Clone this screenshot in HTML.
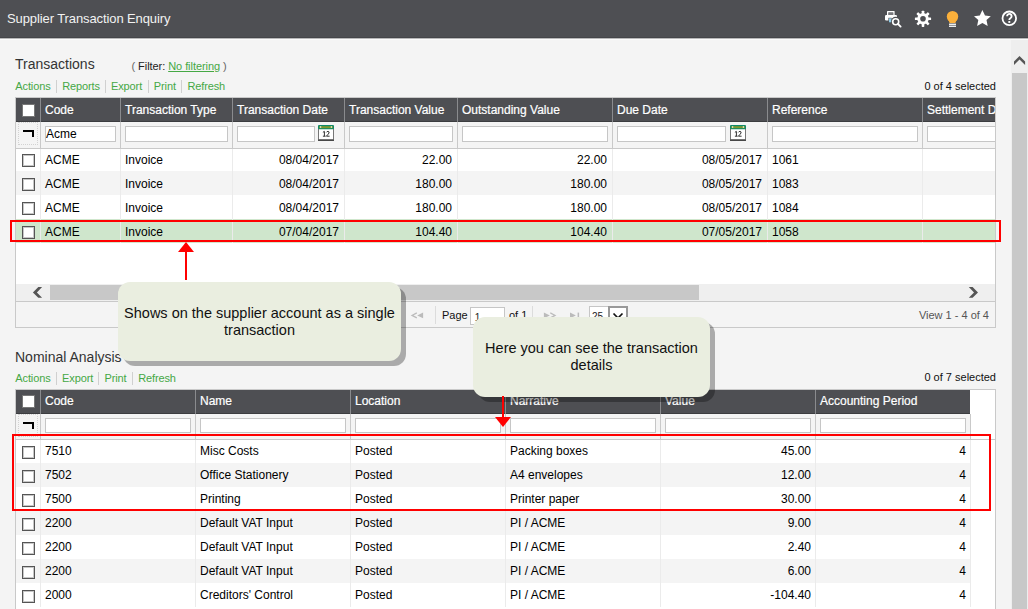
<!DOCTYPE html>
<html><head><meta charset="utf-8"><style>
html,body{margin:0;padding:0;}
body{width:1028px;height:609px;overflow:hidden;position:relative;background:#f4f4f4;font-family:"Liberation Sans",sans-serif;}
body div, body svg{position:absolute;}
.t{white-space:nowrap;line-height:1;}
.t span{position:static;}
</style></head><body>
<div style="left:0px;top:0px;width:1028px;height:38px;background:#4e4f53;"></div>
<div style="left:0px;top:37px;width:1028px;height:1px;background:#45464a;"></div>
<div style="left:0px;top:38px;width:1028px;height:1px;background:#b9b9ba;"></div>
<div style="left:0px;top:39px;width:1028px;height:1px;background:#fbfbfb;"></div>
<div class="t" style="left:7px;top:12.00px;font-size:13px;color:#f2f2f2;letter-spacing:-0.1px;">Supplier Transaction Enquiry</div>
<svg style="position:absolute;left:870px;top:0px" width="158" height="38" viewBox="870 0 158 38">
  <!-- print preview -->
  <rect x="887" y="11" width="7.6" height="5" rx="0.6" fill="#fff"/>
  <rect x="888.3" y="12.3" width="5" height="3" fill="#66676b"/>
  <rect x="888.3" y="13.1" width="5" height="0.5" fill="#8a8b8e"/>
  <rect x="888.3" y="14.2" width="5" height="0.5" fill="#8a8b8e"/>
  <rect x="885" y="15" width="12" height="5.6" rx="1.3" fill="#fff"/>
  <circle cx="895.7" cy="21.7" r="4.9" fill="#4e4f53"/>
  <rect x="888.4" y="17.8" width="3.2" height="5" fill="#4e4f53"/>
  <rect x="889" y="18.3" width="2.2" height="4" fill="#8fcbe6"/>
  <circle cx="895.7" cy="21.7" r="3.0" fill="none" stroke="#fff" stroke-width="1.6"/>
  <line x1="897.9" y1="23.9" x2="900.6" y2="26.6" stroke="#fff" stroke-width="1.9" stroke-linecap="round"/>
  <!-- gear -->
  <g transform="translate(923,18.8)" fill="#fff">
    <circle r="5.7"/>
    <rect x="-1.3" y="-8.1" width="2.6" height="16.2" rx="0.6"/>
    <rect x="-1.3" y="-8.1" width="2.6" height="16.2" rx="0.6" transform="rotate(45)"/>
    <rect x="-1.3" y="-8.1" width="2.6" height="16.2" rx="0.6" transform="rotate(90)"/>
    <rect x="-1.3" y="-8.1" width="2.6" height="16.2" rx="0.6" transform="rotate(135)"/>
    <circle r="2.8" fill="#4e4f53"/>
  </g>
  <!-- bulb -->
  <circle cx="952.5" cy="16.6" r="5.7" fill="#fbb03b"/>
  <path d="M948.4 19.8 L949.6 22.9 L955.4 22.9 L956.6 19.8 Z" fill="#fbb03b"/>
  <rect x="949" y="23.6" width="7" height="1.3" fill="#fff"/>
  <rect x="949" y="25.6" width="7" height="1.3" fill="#fff"/>
  <!-- star -->
  <path transform="translate(0.4,0)" d="M982 10 L984.6 15.6 L990.4 16.2 L986.1 20.1 L987.3 26 L982 23 L976.7 26 L977.9 20.1 L973.6 16.2 L979.4 15.6 Z" fill="#fff"/>
  <!-- help -->
  <circle cx="1009.3" cy="18.3" r="6.8" fill="none" stroke="#fff" stroke-width="1.8"/>
  <path d="M1007.1 16.2 A2.25 2.25 0 1 1 1010.6 18 C1009.6 18.6 1009.3 19 1009.3 20" fill="none" stroke="#fff" stroke-width="1.9"/>
  <rect x="1008.35" y="21" width="1.9" height="1.9" fill="#fff"/>
</svg>
<div class="t" style="left:15px;top:57.15px;font-size:14px;color:#333;">Transactions</div>
<div class="t" style="left:131.5px;top:60.69px;font-size:11px;color:#222;letter-spacing:-0.06px;"><span style="color:#666">(</span> Filter: <span style="color:#45a845;text-decoration:underline">No filtering</span> <span style="color:#666">)</span></div>
<div class="t" style="left:15.3px;top:80.69px;font-size:11px;color:#45a845;letter-spacing:-0.12px;">Actions</div>
<div style="left:56px;top:80px;width:1px;height:13px;background:#d0d0d0;"></div>
<div class="t" style="left:62.2px;top:80.69px;font-size:11px;color:#45a845;letter-spacing:-0.12px;">Reports</div>
<div style="left:105px;top:80px;width:1px;height:13px;background:#d0d0d0;"></div>
<div class="t" style="left:111px;top:80.69px;font-size:11px;color:#45a845;letter-spacing:-0.12px;">Export</div>
<div style="left:148px;top:80px;width:1px;height:13px;background:#d0d0d0;"></div>
<div class="t" style="left:153.8px;top:80.69px;font-size:11px;color:#45a845;letter-spacing:-0.12px;">Print</div>
<div style="left:181px;top:80px;width:1px;height:13px;background:#d0d0d0;"></div>
<div class="t" style="left:187.4px;top:80.69px;font-size:11px;color:#45a845;letter-spacing:-0.12px;">Refresh</div>
<div class="t" style="right:32px;top:81.19px;font-size:11px;color:#111;">0 of 4 selected</div>
<div style="left:15px;top:97px;width:981px;height:231px;border:1px solid #c9c9c9;box-sizing:border-box;background:#fff;"></div>
<div style="left:16px;top:147px;width:979px;height:24px;background:#fff;"></div>
<div style="left:40px;top:147px;width:1px;height:24px;background:#ebebeb;"></div>
<div style="left:120px;top:147px;width:1px;height:24px;background:#ebebeb;"></div>
<div style="left:232px;top:147px;width:1px;height:24px;background:#ebebeb;"></div>
<div style="left:344px;top:147px;width:1px;height:24px;background:#ebebeb;"></div>
<div style="left:457px;top:147px;width:1px;height:24px;background:#ebebeb;"></div>
<div style="left:612px;top:147px;width:1px;height:24px;background:#ebebeb;"></div>
<div style="left:767px;top:147px;width:1px;height:24px;background:#ebebeb;"></div>
<div style="left:922px;top:147px;width:1px;height:24px;background:#ebebeb;"></div>
<div style="left:22px;top:154px;width:13px;height:13px;background:#fff;border:1px solid #555;box-sizing:border-box;box-shadow:inset 0 0 0 1px rgba(0,0,0,0.22);"></div>
<div class="t" style="left:45px;top:153.84px;font-size:12px;color:#000;">ACME</div>
<div class="t" style="left:125px;top:153.84px;font-size:12px;color:#000;">Invoice</div>
<div class="t" style="right:689px;top:153.84px;font-size:12px;color:#000;">08/04/2017</div>
<div class="t" style="right:576px;top:153.84px;font-size:12px;color:#000;">22.00</div>
<div class="t" style="right:421px;top:153.84px;font-size:12px;color:#000;">22.00</div>
<div class="t" style="right:266px;top:153.84px;font-size:12px;color:#000;">08/05/2017</div>
<div class="t" style="left:772px;top:153.84px;font-size:12px;color:#000;">1061</div>
<div style="left:16px;top:171px;width:979px;height:24px;background:#f4f4f4;"></div>
<div style="left:40px;top:171px;width:1px;height:24px;background:#ebebeb;"></div>
<div style="left:120px;top:171px;width:1px;height:24px;background:#ebebeb;"></div>
<div style="left:232px;top:171px;width:1px;height:24px;background:#ebebeb;"></div>
<div style="left:344px;top:171px;width:1px;height:24px;background:#ebebeb;"></div>
<div style="left:457px;top:171px;width:1px;height:24px;background:#ebebeb;"></div>
<div style="left:612px;top:171px;width:1px;height:24px;background:#ebebeb;"></div>
<div style="left:767px;top:171px;width:1px;height:24px;background:#ebebeb;"></div>
<div style="left:922px;top:171px;width:1px;height:24px;background:#ebebeb;"></div>
<div style="left:22px;top:178px;width:13px;height:13px;background:#fff;border:1px solid #555;box-sizing:border-box;box-shadow:inset 0 0 0 1px rgba(0,0,0,0.22);"></div>
<div class="t" style="left:45px;top:177.84px;font-size:12px;color:#000;">ACME</div>
<div class="t" style="left:125px;top:177.84px;font-size:12px;color:#000;">Invoice</div>
<div class="t" style="right:689px;top:177.84px;font-size:12px;color:#000;">08/04/2017</div>
<div class="t" style="right:576px;top:177.84px;font-size:12px;color:#000;">180.00</div>
<div class="t" style="right:421px;top:177.84px;font-size:12px;color:#000;">180.00</div>
<div class="t" style="right:266px;top:177.84px;font-size:12px;color:#000;">08/05/2017</div>
<div class="t" style="left:772px;top:177.84px;font-size:12px;color:#000;">1083</div>
<div style="left:16px;top:195px;width:979px;height:24px;background:#fff;"></div>
<div style="left:40px;top:195px;width:1px;height:24px;background:#ebebeb;"></div>
<div style="left:120px;top:195px;width:1px;height:24px;background:#ebebeb;"></div>
<div style="left:232px;top:195px;width:1px;height:24px;background:#ebebeb;"></div>
<div style="left:344px;top:195px;width:1px;height:24px;background:#ebebeb;"></div>
<div style="left:457px;top:195px;width:1px;height:24px;background:#ebebeb;"></div>
<div style="left:612px;top:195px;width:1px;height:24px;background:#ebebeb;"></div>
<div style="left:767px;top:195px;width:1px;height:24px;background:#ebebeb;"></div>
<div style="left:922px;top:195px;width:1px;height:24px;background:#ebebeb;"></div>
<div style="left:22px;top:202px;width:13px;height:13px;background:#fff;border:1px solid #555;box-sizing:border-box;box-shadow:inset 0 0 0 1px rgba(0,0,0,0.22);"></div>
<div class="t" style="left:45px;top:201.84px;font-size:12px;color:#000;">ACME</div>
<div class="t" style="left:125px;top:201.84px;font-size:12px;color:#000;">Invoice</div>
<div class="t" style="right:689px;top:201.84px;font-size:12px;color:#000;">08/04/2017</div>
<div class="t" style="right:576px;top:201.84px;font-size:12px;color:#000;">180.00</div>
<div class="t" style="right:421px;top:201.84px;font-size:12px;color:#000;">180.00</div>
<div class="t" style="right:266px;top:201.84px;font-size:12px;color:#000;">08/05/2017</div>
<div class="t" style="left:772px;top:201.84px;font-size:12px;color:#000;">1084</div>
<div style="left:16px;top:219px;width:979px;height:24px;background:#cfe6cc;"></div>
<div style="left:40px;top:219px;width:1px;height:24px;background:#ebebeb;"></div>
<div style="left:120px;top:219px;width:1px;height:24px;background:#ebebeb;"></div>
<div style="left:232px;top:219px;width:1px;height:24px;background:#ebebeb;"></div>
<div style="left:344px;top:219px;width:1px;height:24px;background:#ebebeb;"></div>
<div style="left:457px;top:219px;width:1px;height:24px;background:#ebebeb;"></div>
<div style="left:612px;top:219px;width:1px;height:24px;background:#ebebeb;"></div>
<div style="left:767px;top:219px;width:1px;height:24px;background:#ebebeb;"></div>
<div style="left:922px;top:219px;width:1px;height:24px;background:#ebebeb;"></div>
<div style="left:22px;top:226px;width:13px;height:13px;background:#fff;border:1px solid #555;box-sizing:border-box;box-shadow:inset 0 0 0 1px rgba(0,0,0,0.22);"></div>
<div class="t" style="left:45px;top:225.84px;font-size:12px;color:#000;">ACME</div>
<div class="t" style="left:125px;top:225.84px;font-size:12px;color:#000;">Invoice</div>
<div class="t" style="right:689px;top:225.84px;font-size:12px;color:#000;">07/04/2017</div>
<div class="t" style="right:576px;top:225.84px;font-size:12px;color:#000;">104.40</div>
<div class="t" style="right:421px;top:225.84px;font-size:12px;color:#000;">104.40</div>
<div class="t" style="right:266px;top:225.84px;font-size:12px;color:#000;">07/05/2017</div>
<div class="t" style="left:772px;top:225.84px;font-size:12px;color:#000;">1058</div>
<div style="left:16px;top:98px;width:979px;height:24px;background:#4e4f53;"></div>
<div style="left:16px;top:121px;width:979px;height:1px;background:#3c3d40;"></div>
<div style="left:40px;top:98px;width:1px;height:24px;background:#8a8b8e;"></div>
<div class="t" style="left:45px;top:103.84px;font-size:12px;color:#fff;-webkit-text-stroke:0.2px #fff;">Code</div>
<div style="left:120px;top:98px;width:1px;height:24px;background:#8a8b8e;"></div>
<div class="t" style="left:125px;top:103.84px;font-size:12px;color:#fff;-webkit-text-stroke:0.2px #fff;">Transaction Type</div>
<div style="left:232px;top:98px;width:1px;height:24px;background:#8a8b8e;"></div>
<div class="t" style="left:237px;top:103.84px;font-size:12px;color:#fff;-webkit-text-stroke:0.2px #fff;">Transaction Date</div>
<div style="left:344px;top:98px;width:1px;height:24px;background:#8a8b8e;"></div>
<div class="t" style="left:349px;top:103.84px;font-size:12px;color:#fff;-webkit-text-stroke:0.2px #fff;">Transaction Value</div>
<div style="left:457px;top:98px;width:1px;height:24px;background:#8a8b8e;"></div>
<div class="t" style="left:462px;top:103.84px;font-size:12px;color:#fff;-webkit-text-stroke:0.2px #fff;">Outstanding Value</div>
<div style="left:612px;top:98px;width:1px;height:24px;background:#8a8b8e;"></div>
<div class="t" style="left:617px;top:103.84px;font-size:12px;color:#fff;-webkit-text-stroke:0.2px #fff;">Due Date</div>
<div style="left:767px;top:98px;width:1px;height:24px;background:#8a8b8e;"></div>
<div class="t" style="left:772px;top:103.84px;font-size:12px;color:#fff;-webkit-text-stroke:0.2px #fff;">Reference</div>
<div style="left:922px;top:98px;width:1px;height:24px;background:#8a8b8e;"></div>
<div class="t" style="left:927px;top:103.84px;font-size:12px;color:#fff;-webkit-text-stroke:0.2px #fff;">Settlement Date</div>
<div style="left:22px;top:104px;width:13px;height:13px;background:#fff;border:1px solid #777;box-sizing:border-box;"></div>
<div style="left:16px;top:122px;width:979px;height:27px;background:#f4f4f4;"></div>
<div style="left:16px;top:148px;width:979px;height:1px;background:#c9c9c9;"></div>
<div style="left:40px;top:122px;width:1px;height:27px;background:#c9c9c9;"></div>
<div style="left:120px;top:122px;width:1px;height:27px;background:#c9c9c9;"></div>
<div style="left:232px;top:122px;width:1px;height:27px;background:#c9c9c9;"></div>
<div style="left:344px;top:122px;width:1px;height:27px;background:#c9c9c9;"></div>
<div style="left:457px;top:122px;width:1px;height:27px;background:#c9c9c9;"></div>
<div style="left:612px;top:122px;width:1px;height:27px;background:#c9c9c9;"></div>
<div style="left:767px;top:122px;width:1px;height:27px;background:#c9c9c9;"></div>
<div style="left:922px;top:122px;width:1px;height:27px;background:#c9c9c9;"></div>
<div style="left:18px;top:122px;width:20px;height:23px;border:1px dotted #d2d2d2;box-sizing:border-box;"></div>
<div style="left:23px;top:130px;width:11px;height:2px;background:#000;"></div>
<div style="left:32px;top:130px;width:2px;height:7px;background:#000;"></div>
<div style="left:45px;top:126px;width:71px;height:16px;background:#fff;border:1px solid #c6c6c6;box-sizing:border-box;"></div>
<div class="t" style="left:46px;top:127.84px;font-size:12px;color:#000;">Acme</div>
<div style="left:125px;top:126px;width:103px;height:16px;background:#fff;border:1px solid #c6c6c6;box-sizing:border-box;"></div>
<div style="left:237px;top:126px;width:78px;height:16px;background:#fff;border:1px solid #c6c6c6;box-sizing:border-box;"></div>
<svg style="position:absolute;left:318px;top:125px" width="16" height="16" viewBox="0 0 16 16">
<rect x="0.5" y="0.5" width="15" height="15" rx="1" fill="#fff" stroke="#777" stroke-width="1"/>
<rect x="0" y="14.3" width="16" height="1.7" rx="0.6" fill="#474747"/>
<rect x="0" y="0" width="16" height="4.2" rx="1.2" fill="#0e8a6a"/>
<rect x="1.2" y="1.2" width="13.6" height="2" fill="#7e9a2e"/>
<circle cx="2.6" cy="1.9" r="0.75" fill="#fff"/>
<circle cx="13.4" cy="1.9" r="0.75" fill="#fff"/>
<path d="M4.9 7.3 L6.4 6.4 V11.2 M4.9 11.2 H7.6" fill="none" stroke="#333" stroke-width="1"/>
<path d="M8.3 7.4 Q8.9 6.3 10.1 6.4 Q11.5 6.6 11 8 Q10.6 8.8 8.4 11.2 H11.6" fill="none" stroke="#333" stroke-width="1"/>
</svg>
<div style="left:349px;top:126px;width:104px;height:16px;background:#fff;border:1px solid #c6c6c6;box-sizing:border-box;"></div>
<div style="left:462px;top:126px;width:146px;height:16px;background:#fff;border:1px solid #c6c6c6;box-sizing:border-box;"></div>
<div style="left:617px;top:126px;width:109px;height:16px;background:#fff;border:1px solid #c6c6c6;box-sizing:border-box;"></div>
<svg style="position:absolute;left:730px;top:125px" width="16" height="16" viewBox="0 0 16 16">
<rect x="0.5" y="0.5" width="15" height="15" rx="1" fill="#fff" stroke="#777" stroke-width="1"/>
<rect x="0" y="14.3" width="16" height="1.7" rx="0.6" fill="#474747"/>
<rect x="0" y="0" width="16" height="4.2" rx="1.2" fill="#0e8a6a"/>
<rect x="1.2" y="1.2" width="13.6" height="2" fill="#7e9a2e"/>
<circle cx="2.6" cy="1.9" r="0.75" fill="#fff"/>
<circle cx="13.4" cy="1.9" r="0.75" fill="#fff"/>
<path d="M4.9 7.3 L6.4 6.4 V11.2 M4.9 11.2 H7.6" fill="none" stroke="#333" stroke-width="1"/>
<path d="M8.3 7.4 Q8.9 6.3 10.1 6.4 Q11.5 6.6 11 8 Q10.6 8.8 8.4 11.2 H11.6" fill="none" stroke="#333" stroke-width="1"/>
</svg>
<div style="left:772px;top:126px;width:146px;height:16px;background:#fff;border:1px solid #c6c6c6;box-sizing:border-box;"></div>
<div style="left:927px;top:126px;width:146px;height:16px;background:#fff;border:1px solid #c6c6c6;box-sizing:border-box;"></div>
<div style="left:995px;top:97px;width:33px;height:231px;background:#f4f4f4;"></div>
<div style="left:995px;top:97px;width:1px;height:231px;background:#c9c9c9;"></div>
<div style="left:15px;top:97px;width:981px;height:1px;background:#c9c9c9;"></div>
<div style="left:16px;top:284px;width:979px;height:17px;background:#efefef;"></div>
<div style="left:50px;top:285px;width:649px;height:15px;background:#c8c8c8;"></div>
<div style="left:16px;top:301px;width:979px;height:26px;background:#f4f4f4;"></div>
<div style="left:16px;top:301px;width:979px;height:1px;background:#c9c9c9;"></div>
<div style="left:15px;top:327px;width:981px;height:1px;background:#c9c9c9;"></div>
<svg style="position:absolute;left:0;top:0" width="1028" height="609" viewBox="0 0 1028 609"><path d="M416.8 312.9 L412 315.4 L416.8 317.9" fill="none" stroke="#bbb" stroke-width="1.2"/><path d="M417.2 315.4 L423.1 312.6 L423.1 318.2 Z" fill="#bbb"/><path d="M543.9 312.6 L549.9 315.4 L543.9 318.2 Z" fill="#bbb"/><path d="M550.3 312.9 L555.1 315.4 L550.3 317.9" fill="none" stroke="#bbb" stroke-width="1.2"/><path d="M570 312.6 L575.9 315.4 L570 318.2 Z" fill="#bbb"/><rect x="577.6" y="312.6" width="1.5" height="5.6" fill="#bbb"/></svg>
<div style="left:435px;top:306px;width:1px;height:18px;background:#dcdcdc;"></div>
<div class="t" style="left:442px;top:310.19px;font-size:11px;color:#111;">Page</div>
<div style="left:470px;top:307px;width:35px;height:18px;background:#fff;border:1px solid #c6c6c6;box-sizing:border-box;"></div>
<div class="t" style="left:474.8px;top:312.54px;font-size:10px;color:#222;">1</div>
<div class="t" style="left:509px;top:310.19px;font-size:11px;color:#111;">of 1</div>
<div style="left:532px;top:306px;width:1px;height:18px;background:#dcdcdc;"></div>
<div style="left:589px;top:306px;width:39px;height:19px;background:#fff;border:1px solid #c6c6c6;box-sizing:border-box;"></div>
<div class="t" style="left:592px;top:311.54px;font-size:10px;color:#222;">25</div>
<div style="left:608px;top:306px;width:20px;height:19px;background:#fff;border:2px solid #999;box-sizing:border-box;"></div>
<svg style="position:absolute;left:610px;top:308px" width="16" height="15" viewBox="0 0 16 15"><path d="M3.5 5.5 L8 10 L12.5 5.5" fill="none" stroke="#111" stroke-width="1.7"/></svg>
<div class="t" style="right:39px;top:310.19px;font-size:11px;color:#555;">View 1 - 4 of 4</div>
<div class="t" style="left:15px;top:349.65px;font-size:14px;color:#333;">Nominal Analysis</div>
<div class="t" style="left:15.3px;top:372.69px;font-size:11px;color:#45a845;letter-spacing:-0.12px;">Actions</div>
<div style="left:56px;top:372px;width:1px;height:13px;background:#d0d0d0;"></div>
<div class="t" style="left:62.1px;top:372.69px;font-size:11px;color:#45a845;letter-spacing:-0.12px;">Export</div>
<div style="left:98px;top:372px;width:1px;height:13px;background:#d0d0d0;"></div>
<div class="t" style="left:104.5px;top:372.69px;font-size:11px;color:#45a845;letter-spacing:-0.12px;">Print</div>
<div style="left:132px;top:372px;width:1px;height:13px;background:#d0d0d0;"></div>
<div class="t" style="left:138.2px;top:372.69px;font-size:11px;color:#45a845;letter-spacing:-0.12px;">Refresh</div>
<div class="t" style="right:32px;top:371.69px;font-size:11px;color:#111;">0 of 7 selected</div>
<div style="left:15px;top:389px;width:981px;height:225px;border:1px solid #c9c9c9;box-sizing:border-box;background:#fff;"></div>
<div style="left:16px;top:439px;width:954px;height:24px;background:#fff;"></div>
<div style="left:40px;top:439px;width:1px;height:24px;background:#ebebeb;"></div>
<div style="left:195px;top:439px;width:1px;height:24px;background:#ebebeb;"></div>
<div style="left:350px;top:439px;width:1px;height:24px;background:#ebebeb;"></div>
<div style="left:505px;top:439px;width:1px;height:24px;background:#ebebeb;"></div>
<div style="left:660px;top:439px;width:1px;height:24px;background:#ebebeb;"></div>
<div style="left:815px;top:439px;width:1px;height:24px;background:#ebebeb;"></div>
<div style="left:970px;top:439px;width:1px;height:24px;background:#ebebeb;"></div>
<div style="left:22px;top:446px;width:13px;height:13px;background:#fff;border:1px solid #555;box-sizing:border-box;box-shadow:inset 0 0 0 1px rgba(0,0,0,0.22);"></div>
<div class="t" style="left:45px;top:444.84px;font-size:12px;color:#000;">7510</div>
<div class="t" style="left:200px;top:444.84px;font-size:12px;color:#000;">Misc Costs</div>
<div class="t" style="left:355px;top:444.84px;font-size:12px;color:#000;">Posted</div>
<div class="t" style="left:510px;top:444.84px;font-size:12px;color:#000;">Packing boxes</div>
<div class="t" style="right:217px;top:444.84px;font-size:12px;color:#000;">45.00</div>
<div class="t" style="right:62px;top:444.84px;font-size:12px;color:#000;">4</div>
<div style="left:16px;top:463px;width:954px;height:24px;background:#f4f4f4;"></div>
<div style="left:40px;top:463px;width:1px;height:24px;background:#ebebeb;"></div>
<div style="left:195px;top:463px;width:1px;height:24px;background:#ebebeb;"></div>
<div style="left:350px;top:463px;width:1px;height:24px;background:#ebebeb;"></div>
<div style="left:505px;top:463px;width:1px;height:24px;background:#ebebeb;"></div>
<div style="left:660px;top:463px;width:1px;height:24px;background:#ebebeb;"></div>
<div style="left:815px;top:463px;width:1px;height:24px;background:#ebebeb;"></div>
<div style="left:970px;top:463px;width:1px;height:24px;background:#ebebeb;"></div>
<div style="left:22px;top:470px;width:13px;height:13px;background:#fff;border:1px solid #555;box-sizing:border-box;box-shadow:inset 0 0 0 1px rgba(0,0,0,0.22);"></div>
<div class="t" style="left:45px;top:468.84px;font-size:12px;color:#000;">7502</div>
<div class="t" style="left:200px;top:468.84px;font-size:12px;color:#000;">Office Stationery</div>
<div class="t" style="left:355px;top:468.84px;font-size:12px;color:#000;">Posted</div>
<div class="t" style="left:510px;top:468.84px;font-size:12px;color:#000;">A4 envelopes</div>
<div class="t" style="right:217px;top:468.84px;font-size:12px;color:#000;">12.00</div>
<div class="t" style="right:62px;top:468.84px;font-size:12px;color:#000;">4</div>
<div style="left:16px;top:487px;width:954px;height:24px;background:#fff;"></div>
<div style="left:40px;top:487px;width:1px;height:24px;background:#ebebeb;"></div>
<div style="left:195px;top:487px;width:1px;height:24px;background:#ebebeb;"></div>
<div style="left:350px;top:487px;width:1px;height:24px;background:#ebebeb;"></div>
<div style="left:505px;top:487px;width:1px;height:24px;background:#ebebeb;"></div>
<div style="left:660px;top:487px;width:1px;height:24px;background:#ebebeb;"></div>
<div style="left:815px;top:487px;width:1px;height:24px;background:#ebebeb;"></div>
<div style="left:970px;top:487px;width:1px;height:24px;background:#ebebeb;"></div>
<div style="left:22px;top:494px;width:13px;height:13px;background:#fff;border:1px solid #555;box-sizing:border-box;box-shadow:inset 0 0 0 1px rgba(0,0,0,0.22);"></div>
<div class="t" style="left:45px;top:492.84px;font-size:12px;color:#000;">7500</div>
<div class="t" style="left:200px;top:492.84px;font-size:12px;color:#000;">Printing</div>
<div class="t" style="left:355px;top:492.84px;font-size:12px;color:#000;">Posted</div>
<div class="t" style="left:510px;top:492.84px;font-size:12px;color:#000;">Printer paper</div>
<div class="t" style="right:217px;top:492.84px;font-size:12px;color:#000;">30.00</div>
<div class="t" style="right:62px;top:492.84px;font-size:12px;color:#000;">4</div>
<div style="left:16px;top:511px;width:954px;height:24px;background:#f4f4f4;"></div>
<div style="left:40px;top:511px;width:1px;height:24px;background:#ebebeb;"></div>
<div style="left:195px;top:511px;width:1px;height:24px;background:#ebebeb;"></div>
<div style="left:350px;top:511px;width:1px;height:24px;background:#ebebeb;"></div>
<div style="left:505px;top:511px;width:1px;height:24px;background:#ebebeb;"></div>
<div style="left:660px;top:511px;width:1px;height:24px;background:#ebebeb;"></div>
<div style="left:815px;top:511px;width:1px;height:24px;background:#ebebeb;"></div>
<div style="left:970px;top:511px;width:1px;height:24px;background:#ebebeb;"></div>
<div style="left:22px;top:518px;width:13px;height:13px;background:#fff;border:1px solid #555;box-sizing:border-box;box-shadow:inset 0 0 0 1px rgba(0,0,0,0.22);"></div>
<div class="t" style="left:45px;top:516.84px;font-size:12px;color:#000;">2200</div>
<div class="t" style="left:200px;top:516.84px;font-size:12px;color:#000;">Default VAT Input</div>
<div class="t" style="left:355px;top:516.84px;font-size:12px;color:#000;">Posted</div>
<div class="t" style="left:510px;top:516.84px;font-size:12px;color:#000;">PI / ACME</div>
<div class="t" style="right:217px;top:516.84px;font-size:12px;color:#000;">9.00</div>
<div class="t" style="right:62px;top:516.84px;font-size:12px;color:#000;">4</div>
<div style="left:16px;top:535px;width:954px;height:24px;background:#fff;"></div>
<div style="left:40px;top:535px;width:1px;height:24px;background:#ebebeb;"></div>
<div style="left:195px;top:535px;width:1px;height:24px;background:#ebebeb;"></div>
<div style="left:350px;top:535px;width:1px;height:24px;background:#ebebeb;"></div>
<div style="left:505px;top:535px;width:1px;height:24px;background:#ebebeb;"></div>
<div style="left:660px;top:535px;width:1px;height:24px;background:#ebebeb;"></div>
<div style="left:815px;top:535px;width:1px;height:24px;background:#ebebeb;"></div>
<div style="left:970px;top:535px;width:1px;height:24px;background:#ebebeb;"></div>
<div style="left:22px;top:542px;width:13px;height:13px;background:#fff;border:1px solid #555;box-sizing:border-box;box-shadow:inset 0 0 0 1px rgba(0,0,0,0.22);"></div>
<div class="t" style="left:45px;top:540.84px;font-size:12px;color:#000;">2200</div>
<div class="t" style="left:200px;top:540.84px;font-size:12px;color:#000;">Default VAT Input</div>
<div class="t" style="left:355px;top:540.84px;font-size:12px;color:#000;">Posted</div>
<div class="t" style="left:510px;top:540.84px;font-size:12px;color:#000;">PI / ACME</div>
<div class="t" style="right:217px;top:540.84px;font-size:12px;color:#000;">2.40</div>
<div class="t" style="right:62px;top:540.84px;font-size:12px;color:#000;">4</div>
<div style="left:16px;top:559px;width:954px;height:24px;background:#f4f4f4;"></div>
<div style="left:40px;top:559px;width:1px;height:24px;background:#ebebeb;"></div>
<div style="left:195px;top:559px;width:1px;height:24px;background:#ebebeb;"></div>
<div style="left:350px;top:559px;width:1px;height:24px;background:#ebebeb;"></div>
<div style="left:505px;top:559px;width:1px;height:24px;background:#ebebeb;"></div>
<div style="left:660px;top:559px;width:1px;height:24px;background:#ebebeb;"></div>
<div style="left:815px;top:559px;width:1px;height:24px;background:#ebebeb;"></div>
<div style="left:970px;top:559px;width:1px;height:24px;background:#ebebeb;"></div>
<div style="left:22px;top:566px;width:13px;height:13px;background:#fff;border:1px solid #555;box-sizing:border-box;box-shadow:inset 0 0 0 1px rgba(0,0,0,0.22);"></div>
<div class="t" style="left:45px;top:564.84px;font-size:12px;color:#000;">2200</div>
<div class="t" style="left:200px;top:564.84px;font-size:12px;color:#000;">Default VAT Input</div>
<div class="t" style="left:355px;top:564.84px;font-size:12px;color:#000;">Posted</div>
<div class="t" style="left:510px;top:564.84px;font-size:12px;color:#000;">PI / ACME</div>
<div class="t" style="right:217px;top:564.84px;font-size:12px;color:#000;">6.00</div>
<div class="t" style="right:62px;top:564.84px;font-size:12px;color:#000;">4</div>
<div style="left:16px;top:583px;width:954px;height:24px;background:#fff;"></div>
<div style="left:40px;top:583px;width:1px;height:24px;background:#ebebeb;"></div>
<div style="left:195px;top:583px;width:1px;height:24px;background:#ebebeb;"></div>
<div style="left:350px;top:583px;width:1px;height:24px;background:#ebebeb;"></div>
<div style="left:505px;top:583px;width:1px;height:24px;background:#ebebeb;"></div>
<div style="left:660px;top:583px;width:1px;height:24px;background:#ebebeb;"></div>
<div style="left:815px;top:583px;width:1px;height:24px;background:#ebebeb;"></div>
<div style="left:970px;top:583px;width:1px;height:24px;background:#ebebeb;"></div>
<div style="left:22px;top:590px;width:13px;height:13px;background:#fff;border:1px solid #555;box-sizing:border-box;box-shadow:inset 0 0 0 1px rgba(0,0,0,0.22);"></div>
<div class="t" style="left:45px;top:588.84px;font-size:12px;color:#000;">2000</div>
<div class="t" style="left:200px;top:588.84px;font-size:12px;color:#000;">Creditors' Control</div>
<div class="t" style="left:355px;top:588.84px;font-size:12px;color:#000;">Posted</div>
<div class="t" style="left:510px;top:588.84px;font-size:12px;color:#000;">PI / ACME</div>
<div class="t" style="right:217px;top:588.84px;font-size:12px;color:#000;">-104.40</div>
<div class="t" style="right:62px;top:588.84px;font-size:12px;color:#000;">4</div>
<div style="left:16px;top:390px;width:954px;height:24px;background:#4e4f53;"></div>
<div style="left:16px;top:413px;width:954px;height:1px;background:#3c3d40;"></div>
<div style="left:40px;top:390px;width:1px;height:24px;background:#8a8b8e;"></div>
<div class="t" style="left:45px;top:395.34px;font-size:12px;color:#fff;-webkit-text-stroke:0.2px #fff;">Code</div>
<div style="left:195px;top:390px;width:1px;height:24px;background:#8a8b8e;"></div>
<div class="t" style="left:200px;top:395.34px;font-size:12px;color:#fff;-webkit-text-stroke:0.2px #fff;">Name</div>
<div style="left:350px;top:390px;width:1px;height:24px;background:#8a8b8e;"></div>
<div class="t" style="left:355px;top:395.34px;font-size:12px;color:#fff;-webkit-text-stroke:0.2px #fff;">Location</div>
<div style="left:505px;top:390px;width:1px;height:24px;background:#8a8b8e;"></div>
<div class="t" style="left:510px;top:395.34px;font-size:12px;color:#fff;-webkit-text-stroke:0.2px #fff;">Narrative</div>
<div style="left:660px;top:390px;width:1px;height:24px;background:#8a8b8e;"></div>
<div class="t" style="left:665px;top:395.34px;font-size:12px;color:#fff;-webkit-text-stroke:0.2px #fff;">Value</div>
<div style="left:815px;top:390px;width:1px;height:24px;background:#8a8b8e;"></div>
<div class="t" style="left:820px;top:395.34px;font-size:12px;color:#fff;-webkit-text-stroke:0.2px #fff;">Accounting Period</div>
<div style="left:22px;top:395px;width:13px;height:13px;background:#fff;border:1px solid #777;box-sizing:border-box;"></div>
<div style="left:16px;top:414px;width:954px;height:26px;background:#f4f4f4;"></div>
<div style="left:16px;top:439px;width:979px;height:1px;background:#c9c9c9;"></div>
<div style="left:40px;top:414px;width:1px;height:26px;background:#c9c9c9;"></div>
<div style="left:195px;top:414px;width:1px;height:26px;background:#c9c9c9;"></div>
<div style="left:350px;top:414px;width:1px;height:26px;background:#c9c9c9;"></div>
<div style="left:505px;top:414px;width:1px;height:26px;background:#c9c9c9;"></div>
<div style="left:660px;top:414px;width:1px;height:26px;background:#c9c9c9;"></div>
<div style="left:815px;top:414px;width:1px;height:26px;background:#c9c9c9;"></div>
<div style="left:970px;top:414px;width:1px;height:26px;background:#c9c9c9;"></div>
<div style="left:18px;top:414px;width:20px;height:23px;border:1px dotted #d2d2d2;box-sizing:border-box;"></div>
<div style="left:23px;top:422px;width:11px;height:2px;background:#000;"></div>
<div style="left:32px;top:422px;width:2px;height:7px;background:#000;"></div>
<div style="left:45px;top:418px;width:146px;height:15px;background:#fff;border:1px solid #c6c6c6;box-sizing:border-box;"></div>
<div style="left:200px;top:418px;width:146px;height:15px;background:#fff;border:1px solid #c6c6c6;box-sizing:border-box;"></div>
<div style="left:355px;top:418px;width:146px;height:15px;background:#fff;border:1px solid #c6c6c6;box-sizing:border-box;"></div>
<div style="left:510px;top:418px;width:146px;height:15px;background:#fff;border:1px solid #c6c6c6;box-sizing:border-box;"></div>
<div style="left:665px;top:418px;width:146px;height:15px;background:#fff;border:1px solid #c6c6c6;box-sizing:border-box;"></div>
<div style="left:820px;top:418px;width:146px;height:15px;background:#fff;border:1px solid #c6c6c6;box-sizing:border-box;"></div>
<div style="left:1011px;top:40px;width:17px;height:569px;background:#eeeeee;"></div>
<div style="left:1012px;top:73px;width:15px;height:536px;background:#c8c8c8;"></div>
<svg style="position:absolute;left:0;top:0" width="1028" height="609" viewBox="0 0 1028 609"><path d="M1019.5 55.9 L1025.1 61.4 L1025.1 65 L1019.5 59.6 L1014 65 L1014 61.4 Z" fill="#555"/><path d="M32.9 292.5 L38.3 287.1 L42.1 287.1 L36.9 292.5 L42.1 297.8 L38.3 297.8 Z" fill="#555"/><path d="M978 292.5 L972.6 287.1 L968.8 287.1 L974 292.5 L968.8 297.8 L972.6 297.8 Z" fill="#555"/></svg>
<div style="left:10px;top:220px;width:991px;height:22px;border:2px solid #ff0000;box-sizing:border-box;"></div>
<div style="left:12px;top:434px;width:979px;height:77px;border:2px solid #ff0000;box-sizing:border-box;"></div>
<div style="left:123px;top:287px;width:283px;height:79px;background:rgba(0,0,0,0.3);border-radius:12px;"></div>
<div style="left:118px;top:282px;width:283px;height:79px;background:#eaeee0;border-radius:12px;"></div>
<div class="t" style="left:-40.5px;width:600px;text-align:center;top:306.23px;font-size:14.5px;color:#111;">Shows on the supplier account as a single</div>
<div class="t" style="left:-40.5px;width:600px;text-align:center;top:323.23px;font-size:14.5px;color:#111;">transaction</div>
<div style="left:478px;top:322px;width:237px;height:80px;background:rgba(0,0,0,0.3);border-radius:12px;"></div>
<div style="left:473px;top:317px;width:237px;height:80px;background:#eaeee0;border-radius:12px;"></div>
<div class="t" style="left:291.5px;width:600px;text-align:center;top:340.73px;font-size:14.5px;color:#111;">Here you can see the transaction</div>
<div class="t" style="left:291.5px;width:600px;text-align:center;top:357.73px;font-size:14.5px;color:#111;">details</div>
<svg style="position:absolute;left:0;top:0" width="1028" height="609" viewBox="0 0 1028 609">
<rect x="185" y="250" width="2" height="30" fill="#ff0000"/>
<path d="M186 242 L194 252 L178 252 Z" fill="#ff0000"/>
<rect x="502" y="396" width="2" height="22" fill="#ff0000"/>
<path d="M503 427 L511 417 L495 417 Z" fill="#ff0000"/>
</svg>
</body></html>
